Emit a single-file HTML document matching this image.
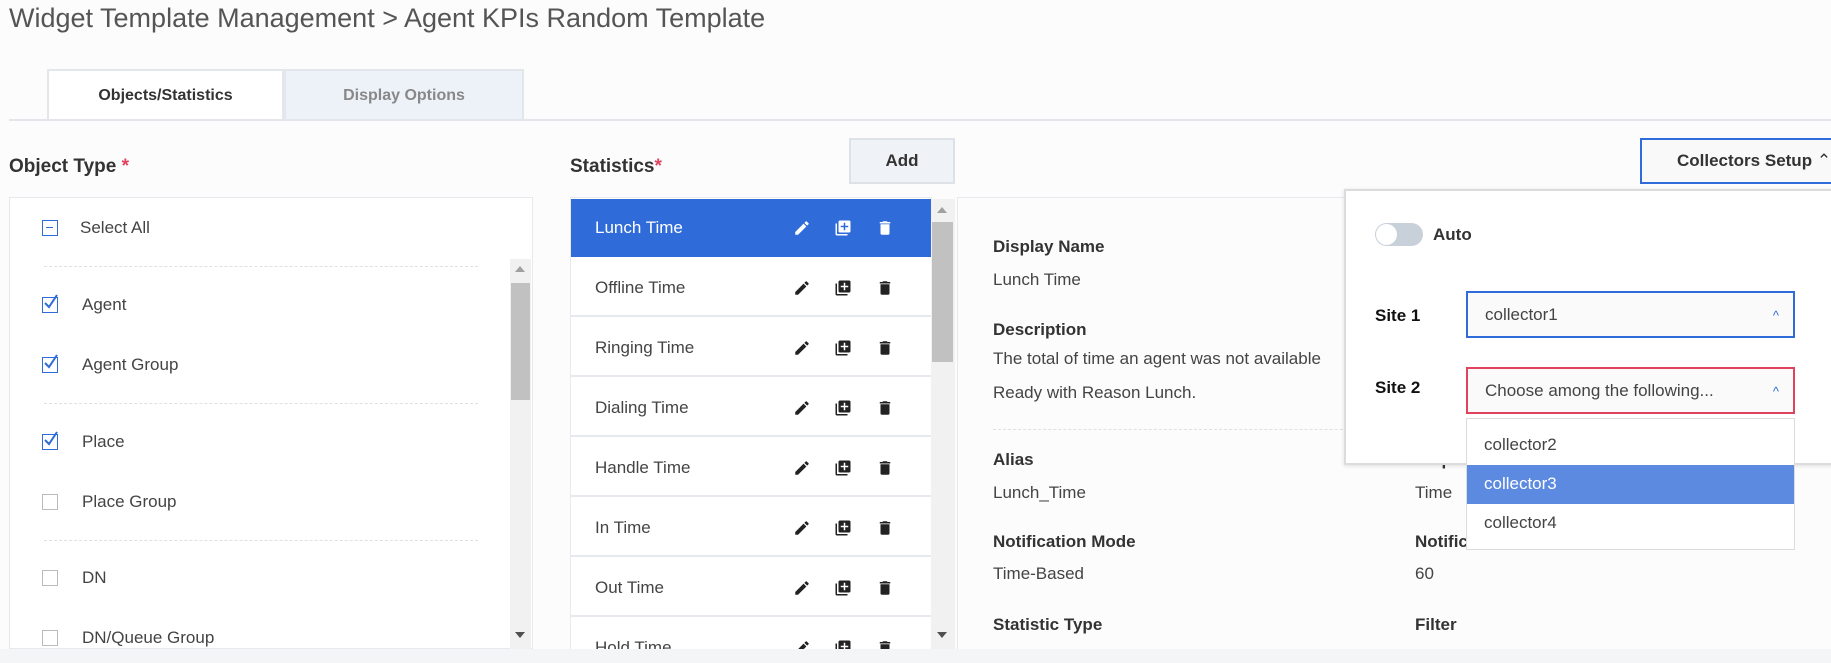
<!DOCTYPE html><html><head><style>
*{margin:0;padding:0;box-sizing:border-box}
body{width:1831px;height:663px;background:#fcfcfd;font-family:"Liberation Sans",sans-serif;color:#444;position:relative;overflow:hidden;font-size:17px}
.a{position:absolute;white-space:nowrap}
.b{font-weight:bold;color:#333}
.row{position:absolute;left:571px;width:360px;height:58px;background:#fff;border-bottom:2px solid #e6e9ee}
.row span{position:absolute;left:24px;top:19px;font-size:17px}
.row svg{position:absolute;top:20px}
.cb{position:absolute;left:42px;width:16px;height:16px;border:1.5px solid #999}
.ck{border-color:#2f6bd9}
.cb svg{position:absolute;left:0;top:-4px}
.dash{position:absolute;left:44px;width:434px;border-top:1.5px dashed #dde0e5}
</style></head><body>
<div class="a" style="left:9px;top:3px;font-size:27px;color:#555">Widget Template Management &gt; Agent KPIs Random Template</div>
<div class="a" style="left:47px;top:69px;width:237px;height:52px;background:#fff;border:2px solid #e3e7ec;border-bottom:none;text-align:center;line-height:50px;font-weight:bold;font-size:16px;color:#333">Objects/Statistics</div>
<div class="a" style="left:284px;top:69px;width:240px;height:52px;background:#edf2f9;border:2px solid #e3e7ec;border-bottom:none;text-align:center;line-height:50px;font-weight:bold;font-size:16px;color:#888">Display Options</div>
<div class="a" style="left:9px;top:119px;width:1822px;height:2px;background:#e3e7ec"></div>
<div class="a b" style="left:9px;top:156px;font-size:19px">Object Type <span style="color:#e0435e">*</span></div>
<div class="a b" style="left:570px;top:156px;font-size:19px">Statistics<span style="color:#e0435e">*</span></div>
<div class="a" style="left:849px;top:138px;width:106px;height:46px;background:#eff2f6;border:2px solid #dde2e8;text-align:center;line-height:42px;font-weight:bold;font-size:17px;color:#333">Add</div>
<div class="a" style="left:9px;top:197px;width:524px;height:452px;background:#fff;border:1.5px solid #e6e9ee"></div>
<div class="a" style="left:510px;top:259px;width:21px;height:390px;background:#f1f1f1"></div>
<div class="a" style="left:511px;top:283px;width:19px;height:117px;background:#c1c1c1"></div>
<div class="a" style="left:515px;top:266px;border:5px solid transparent;border-bottom:6px solid #a0a0a0;border-top:0"></div>
<div class="a" style="left:515px;top:632px;border:5px solid transparent;border-top:6px solid #505050;border-bottom:0"></div>
<div class="cb ck" style="top:220px"><div style="position:absolute;left:3px;top:6px;width:7px;border-top:1.5px solid #2f6bd9"></div></div>
<div class="a" style="left:80px;top:218px">Select All</div>
<div class="dash" style="top:266px"></div>
<div class="cb ck" style="top:297px"><svg width="16" height="16" viewBox="0 0 16 16"><path d="M2 9l4 4 8-12" fill="none" stroke="#2f6bd9" stroke-width="2"/></svg></div>
<div class="a" style="left:82px;top:295px">Agent</div>
<div class="cb ck" style="top:357px"><svg width="16" height="16" viewBox="0 0 16 16"><path d="M2 9l4 4 8-12" fill="none" stroke="#2f6bd9" stroke-width="2"/></svg></div>
<div class="a" style="left:82px;top:355px">Agent Group</div>
<div class="dash" style="top:403px"></div>
<div class="cb ck" style="top:434px"><svg width="16" height="16" viewBox="0 0 16 16"><path d="M2 9l4 4 8-12" fill="none" stroke="#2f6bd9" stroke-width="2"/></svg></div>
<div class="a" style="left:82px;top:432px">Place</div>
<div class="cb" style="top:494px;border-color:#bbb"></div>
<div class="a" style="left:82px;top:492px">Place Group</div>
<div class="dash" style="top:540px"></div>
<div class="cb" style="top:570px;border-color:#bbb"></div>
<div class="a" style="left:82px;top:568px">DN</div>
<div class="cb" style="top:630px;border-color:#bbb"></div>
<div class="a" style="left:82px;top:628px">DN/Queue Group</div>
<div class="a" style="left:570px;top:197px;width:362px;height:452px;background:#fff;border:1.5px solid #e6e9ee"></div>
<div class="a" style="left:931px;top:199px;width:24px;height:450px;background:#f1f1f1"></div>
<div class="a" style="left:932px;top:222px;width:21px;height:140px;background:#c1c1c1"></div>
<div class="a" style="left:937px;top:207px;border:5px solid transparent;border-bottom:6px solid #a0a0a0;border-top:0"></div>
<div class="a" style="left:937px;top:632px;border:5px solid transparent;border-top:6px solid #505050;border-bottom:0"></div>
<div id="rows"></div>
<div class="a" style="left:0;top:649px;width:1831px;height:14px;background:#f4f5f7"></div>
<div class="a" style="left:957px;top:197px;width:874px;height:452px;border-left:1.5px solid #e6e9ee;border-top:1.5px solid #e6e9ee;background:#fcfcfd"></div>
<div class="a b" style="left:993px;top:237px;font-size:17px">Display Name</div>
<div class="a" style="left:993px;top:270px">Lunch Time</div>
<div class="a b" style="left:993px;top:320px">Description</div>
<div class="a" style="left:993px;top:349px">The total of time an agent was not available</div>
<div class="a" style="left:993px;top:383px">Ready with Reason Lunch.</div>
<div class="a" style="left:993px;top:429px;width:420px;border-top:1.5px dashed #dde0e5"></div>
<div class="a b" style="left:993px;top:450px">Alias</div>
<div class="a" style="left:993px;top:483px">Lunch_Time</div>
<div class="a b" style="left:993px;top:532px">Notification Mode</div>
<div class="a" style="left:993px;top:564px">Time-Based</div>
<div class="a b" style="left:993px;top:615px">Statistic Type</div>
<div class="a b" style="left:1415px;top:450px">Displa</div>
<div class="a" style="left:1415px;top:483px">Time</div>
<div class="a b" style="left:1415px;top:532px">Notific</div>
<div class="a" style="left:1415px;top:564px">60</div>
<div class="a b" style="left:1415px;top:615px">Filter</div>
<div class="a" style="left:1640px;top:138px;width:200px;height:46px;background:#f9f9fa;border:2px solid #2f6bd9;line-height:42px;padding-left:35px;font-weight:bold;font-size:17px;color:#333">Collectors Setup <span style="font-weight:normal">⌃</span></div>
<div class="a" style="left:1344px;top:189px;width:500px;height:276px;background:#fff;border:2px solid #dcdcdc;box-shadow:0 1px 4px rgba(0,0,0,.12)"></div>
<div class="a" style="left:1375px;top:223px;width:48px;height:23px;border-radius:12px;background:#c8d0da"></div>
<div class="a" style="left:1376px;top:224px;width:21px;height:21px;border-radius:50%;background:#fff"></div>
<div class="a b" style="left:1433px;top:225px">Auto</div>
<div class="a b" style="left:1375px;top:306px;color:#111">Site 1</div>
<div class="a b" style="left:1375px;top:378px;color:#111">Site 2</div>
<div class="a" style="left:1466px;top:291px;width:329px;height:47px;border:2px solid #2f6bd9;background:#fafafa;padding-left:17px;line-height:43px;font-size:17px">collector1<span style="position:absolute;right:14px;top:1px;font-size:13px;color:#2f6bd9">^</span></div>
<div class="a" style="left:1466px;top:367px;width:329px;height:47px;border:2px solid #e0435e;background:#fafafa;padding-left:17px;line-height:43px;font-size:17px">Choose among the following...<span style="position:absolute;right:14px;top:1px;font-size:13px;color:#2f6bd9">^</span></div>
<div class="a" style="left:1466px;top:418px;width:329px;height:132px;border:1.5px solid #dcdcdc;background:#fff"></div>
<div class="a" style="left:1484px;top:435px">collector2</div>
<div class="a" style="left:1467px;top:465px;width:327px;height:39px;background:#5b8ae0"></div>
<div class="a" style="left:1484px;top:474px;color:#fff">collector3</div>
<div class="a" style="left:1484px;top:513px">collector4</div>
<script>
var n=["Lunch Time","Offline Time","Ringing Time","Dialing Time","Handle Time","In Time","Out Time","Hold Time"],h="";
n.forEach(function(t,i){var top=199+60*i,sel=i==0,c=sel?"#fff":"#222";var hh=i==7?32:58;
h+='<div class="row" style="top:'+top+'px;height:'+hh+'px;overflow:hidden;'+(sel?'background:#2f6bd9;border:none;':'')+'"><span style="color:'+(sel?'#fff':'#444')+'">'+t+'</span>'+
'<svg style="left:222px" width="18" height="18" viewBox="0 0 24 24"><path fill="'+c+'" d="M3 17.25V21h3.75L17.81 9.94l-3.75-3.75L3 17.25zM20.71 7.04a1 1 0 000-1.41l-2.34-2.34a1 1 0 00-1.41 0l-1.83 1.83 3.75 3.75 1.83-1.83z"/></svg>'+
'<svg style="left:263px" width="18" height="18" viewBox="0 0 24 24"><path fill="'+c+'" d="M4 6H2v14a2 2 0 002 2h14v-2H4V6zm16-4H8a2 2 0 00-2 2v12a2 2 0 002 2h12a2 2 0 002-2V4a2 2 0 00-2-2zm-1 9h-4v4h-2v-4H9V9h4V5h2v4h4v2z"/></svg>'+
'<svg style="left:305px" width="18" height="18" viewBox="0 0 24 24"><path fill="'+c+'" d="M6 19a2 2 0 002 2h8a2 2 0 002-2V7H6v12zM19 4h-3.5l-1-1h-5l-1 1H5v2h14V4z"/></svg></div>';});
document.getElementById("rows").innerHTML=h;
</script>
</body></html>
